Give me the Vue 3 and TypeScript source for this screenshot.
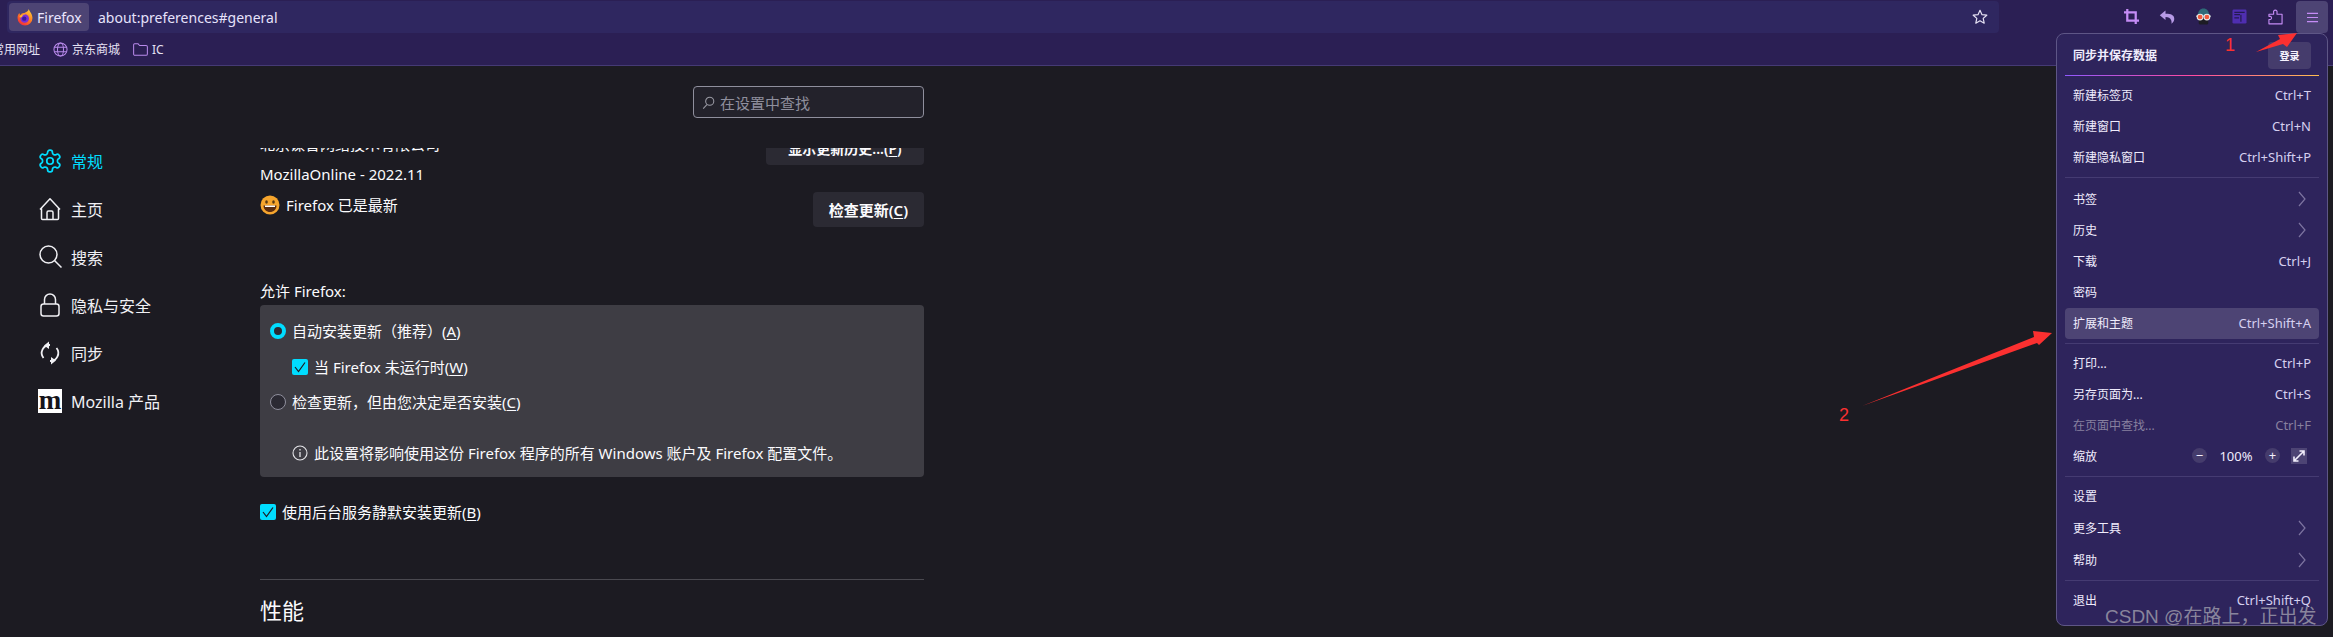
<script setup lang="ts">
interface MenuRow {
  label: string
  keys?: string
  arrow?: boolean
  active?: boolean
  muted?: boolean
  zoom?: boolean
}

const navItems = [
  { label: '常规', active: true, icon: 'gear' },
  { label: '主页', icon: 'home' },
  { label: '搜索', icon: 'search' },
  { label: '隐私与安全', icon: 'lock' },
  { label: '同步', icon: 'sync' },
  { label: 'Mozilla 产品', icon: 'mozilla' }
]

const menuGroups: { rows: MenuRow[]; roomy?: boolean }[] = [
  {
    rows: [
      { label: '新建标签页', keys: 'Ctrl+T' },
      { label: '新建窗口', keys: 'Ctrl+N' },
      { label: '新建隐私窗口', keys: 'Ctrl+Shift+P' }
    ]
  },
  {
    rows: [
      { label: '书签', arrow: true },
      { label: '历史', arrow: true },
      { label: '下载', keys: 'Ctrl+J' },
      { label: '密码' },
      { label: '扩展和主题', keys: 'Ctrl+Shift+A', active: true }
    ]
  },
  {
    rows: [
      { label: '打印...', keys: 'Ctrl+P' },
      { label: '另存页面为...', keys: 'Ctrl+S' },
      { label: '在页面中查找...', keys: 'Ctrl+F', muted: true },
      { label: '缩放', zoom: true }
    ]
  },
  {
    roomy: true,
    rows: [
      { label: '设置' },
      { label: '更多工具', arrow: true },
      { label: '帮助', arrow: true }
    ]
  },
  { rows: [{ label: '退出', keys: 'Ctrl+Shift+Q' }] }
]
</script>

<template>
  <div class="window">
    <header class="toolbar">
      <div class="urlbar">
        <div class="identity">
          <svg class="fx-logo" viewBox="0 0 16 18" width="16" height="17">
            <defs>
              <linearGradient id="fxg" x1="0.8" y1="0" x2="0.2" y2="1">
                <stop offset="0" stop-color="#ffd13a" />
                <stop offset="0.5" stop-color="#ff7a1f" />
                <stop offset="1" stop-color="#f0243f" />
              </linearGradient>
            </defs>
            <path d="M12 0c.5 2.500 3.800 4.800 3.900 9.500A7.900 7.900 0 0 1 8 17.500 7.900 7.900 0 0 1 .1 9.500C.1 7.500.8 5.600 2 4.300c.1 1 .6 1.700 1.200 2C4 4.800 5.600 4 7.300 4.200 9.500 3.500 11.500 2.200 12 0z" fill="url(#fxg)" />
            <circle cx="7.700" cy="10" r="4.500" fill="#7a2fd6" />
            <circle cx="7.200" cy="10.200" r="2.300" fill="#3b1a9c" />
            <path d="M2 8.500c1-2.500 4-3.500 6.500-2.800-2 .1-3.500 1.200-3.600 2.800-.8.500-1.900.500-2.900 0z" fill="#ffb52e" />
          </svg>
          <span>Firefox</span>
        </div>
        <span class="url-text">about:preferences#general</span>
        <svg class="star" viewBox="0 0 16 16" width="16" height="16">
          <path d="M8 1.300l2 4.400 4.800.5-3.600 3.200 1 4.800L8 11.800l-4.200 2.400 1-4.800L1.200 6.200 6 5.700z" fill="none" stroke="#e6e2f4" stroke-width="1.200" stroke-linejoin="round" />
        </svg>
      </div>

      <div class="tool-icons">
        <span class="tool">
          <svg viewBox="0 0 16 16" width="15" height="15" fill="none" stroke="#c58cf5" stroke-width="2.400">
            <path d="M3.500 0v12.500H16M0 3.500h12.500V16" />
          </svg>
        </span>
        <span class="tool">
          <svg viewBox="0 0 16 16" width="16" height="16">
            <path d="M6.500 1.500L.8 6.300l5.700 4.700V8c3 0 4.800 1 5.700 3.200.4 1 .5 2.300.3 3.500 2-1.700 3-3.500 2.700-5.800C14.800 6 11.800 4.600 6.500 4.700z" fill="#b79ae6" />
          </svg>
        </span>
        <span class="tool">
          <svg viewBox="0 0 16 16" width="17" height="17">
            <path d="M2.500 8C2.500 3 5 .5 8 .5S13.500 3 13.500 8z" fill="#2f6a78" />
            <rect x="3.500" y="9" width="9" height="6.500" rx="1.500" fill="#1d1c24" />
            <rect x="1" y="7" width="14" height="1.400" fill="#a9b2b8" />
            <circle cx="4.800" cy="8.500" r="2.700" fill="#f05a3c" stroke="#e7e7e7" />
            <circle cx="11.200" cy="8.500" r="2.700" fill="#f05a3c" stroke="#e7e7e7" />
          </svg>
        </span>
        <span class="tool">
          <svg viewBox="0 0 16 16" width="15" height="15">
            <rect x="0.500" y="0.500" width="15" height="15" rx="1.500" fill="#4f2eb0" />
            <path d="M2.500 3.500h11M2.500 6h6M9.500 6v7.500M2.500 9.500h5" stroke="#231a50" stroke-width="1.300" fill="none" />
          </svg>
        </span>
        <span class="tool">
          <svg viewBox="0 0 16 16" width="15" height="16" fill="none" stroke="#c58cf5" stroke-width="1.200" stroke-linejoin="round">
            <path d="M1 15.300v-4.700h1.500a1.700 1.700 0 0 0 0-3.300H1V5h5V3.200a1.900 1.900 0 1 1 3.600 0V5H15v10.300z" />
          </svg>
        </span>
        <button class="menu-btn">
          <svg viewBox="0 0 14 12" width="13" height="11" stroke="#c58cf5" stroke-width="1.300">
            <path d="M1 1.500h12M1 6h12M1 10.500h12" />
          </svg>
        </button>
      </div>
    </header>

    <nav class="bookmarks">
      <span class="mark clipped">常用网址</span>
      <span class="mark">
        <svg viewBox="0 0 16 16" width="15" height="15" fill="none" stroke="#b98aec" stroke-width="1.100">
          <circle cx="8" cy="8" r="7" />
          <ellipse cx="8" cy="8" rx="3.200" ry="7" />
          <path d="M1.500 5.500h13M1.500 10.500h13" />
        </svg>
        京东商城
      </span>
      <span class="mark">
        <svg viewBox="0 0 16 14" width="15" height="13" fill="none" stroke="#b98aec" stroke-width="1.100" stroke-linejoin="round">
          <path d="M.6 1.800Q.6.700 1.700.700h3.500l1.800 2h7q1.400 0 1.400 1.400v7.700q0 1.500-1.500 1.500H2.100Q.6 13.300.6 11.800z" />
        </svg>
        IC
      </span>
    </nav>

    <main class="page">
      <aside class="side-nav">
        <a v-for="item in navItems" :key="item.label" class="nav-item" :class="{ active: item.active }">
          <span class="nav-icon">
            <svg v-if="item.icon === 'gear'" class="gear" viewBox="0 0 24 24" width="26" height="26" fill="none" stroke="currentColor" stroke-width="1.600">
              <path d="M12.220 2h-.44a2 2 0 0 0-2 2v.18a2 2 0 0 1-1 1.730l-.43.25a2 2 0 0 1-2 0l-.15-.08a2 2 0 0 0-2.730.73l-.22.38a2 2 0 0 0 .73 2.730l.15.1a2 2 0 0 1 1 1.720v.51a2 2 0 0 1-1 1.740l-.15.09a2 2 0 0 0-.73 2.730l.22.38a2 2 0 0 0 2.730.73l.15-.08a2 2 0 0 1 2 0l.43.25a2 2 0 0 1 1 1.730V20a2 2 0 0 0 2 2h.44a2 2 0 0 0 2-2v-.18a2 2 0 0 1 1-1.730l.43-.25a2 2 0 0 1 2 0l.15.08a2 2 0 0 0 2.730-.73l.22-.39a2 2 0 0 0-.73-2.730l-.15-.08a2 2 0 0 1-1-1.740v-.5a2 2 0 0 1 1-1.740l.15-.09a2 2 0 0 0 .73-2.730l-.22-.38a2 2 0 0 0-2.730-.73l-.15.08a2 2 0 0 1-2 0l-.43-.25a2 2 0 0 1-1-1.730V4a2 2 0 0 0-2-2z" />
              <circle cx="12" cy="12" r="3" />
            </svg>
            <svg v-else-if="item.icon === 'home'" viewBox="0 0 24 24" width="24" height="24" fill="none" stroke="currentColor" stroke-width="1.500" stroke-linejoin="round">
              <path d="M2 12.500L12 1.800l10 10.700M3.500 11.500V21.500q0 1 1 1h15q1 0 1-1V11.500" />
              <path d="M9 22.500v-7q0-1.500 1.500-1.500h3q1.500 0 1.500 1.500v7" />
            </svg>
            <svg v-else-if="item.icon === 'search'" viewBox="0 0 24 24" width="24" height="24" fill="none" stroke="currentColor" stroke-width="1.500">
              <circle cx="10.500" cy="9.500" r="8.500" />
              <path d="M16.500 15.500l7 7" />
            </svg>
            <svg v-else-if="item.icon === 'lock'" viewBox="0 0 24 24" width="24" height="24" fill="none" stroke="currentColor" stroke-width="1.500">
              <rect x="3" y="11" width="18" height="12" rx="2.500" />
              <path d="M6.500 11V6.500a5.500 5.500 0 0 1 11 0V11" />
            </svg>
            <svg v-else-if="item.icon === 'sync'" viewBox="0 0 24 24" width="24" height="24">
              <path d="M5.500 17A8 8 0 0 1 12 4M18.500 7A8 8 0 0 1 12 20" fill="none" stroke="currentColor" stroke-width="1.800" />
              <path d="M11 0.500l-5 4 5 3.500zM13 23.500l5-4-5-3.500z" fill="currentColor" />
            </svg>
            <span v-else class="moz-logo">m</span>
          </span>
          <span>{{ item.label }}</span>
        </a>
      </aside>

      <section class="pane">
        <div class="search-row">
          <div class="search-box">
            <svg viewBox="0 0 16 16" width="13" height="15" fill="none" stroke="#9a9aa4" stroke-width="1.300">
              <circle cx="9.500" cy="6.500" r="5" />
              <path d="M6 10.500l-4.500 5" />
            </svg>
            <span>在设置中查找</span>
          </div>
        </div>

        <div class="scroller">
          <div class="line-row clipped-row">
            <span class="text-pad">北京谋智网络技术有限公司</span>
            <button class="btn wide">显示更新历史...(<u>P</u>)</button>
          </div>
          <div class="line version">MozillaOnline - 2022.11</div>
          <div class="line-row status-row">
            <span class="text-pad status">
              <svg viewBox="0 0 20 20" width="20" height="20">
                <ellipse cx="10" cy="10" rx="9.500" ry="9.500" fill="#f6a52d" />
                <ellipse cx="6.500" cy="7" rx="1.300" ry="1.800" fill="#5a3a14" />
                <ellipse cx="13.500" cy="7" rx="1.300" ry="1.800" fill="#5a3a14" />
                <path d="M3.500 10.500h13c0 4-3 6.500-6.500 6.500s-6.500-2.500-6.500-6.500z" fill="#5a2c10" />
                <path d="M5 10.500h10v1.500H5z" fill="#fff" />
              </svg>
              Firefox 已是最新
            </span>
            <button class="btn">检查更新(<u>C</u>)</button>
          </div>

          <div class="line allow">允许 Firefox:</div>
          <div class="option-box">
            <label class="opt">
              <i class="radio on"></i>
              <span>自动安装更新（推荐）(<u>A</u>)</span>
            </label>
            <label class="opt nested check-opt">
              <i class="check">
                <svg viewBox="0 0 16 16" width="16" height="16" fill="none" stroke="#1c1b22" stroke-width="1.200">
                  <path d="M3 8l3.500 4.500L13 3.500" />
                </svg>
              </i>
              <span>当 Firefox 未运行时(<u>W</u>)</span>
            </label>
            <label class="opt radio-second">
              <i class="radio"></i>
              <span>检查更新，但由您决定是否安装(<u>C</u>)</span>
            </label>
            <div class="opt nested info">
              <svg viewBox="0 0 16 16" width="16" height="16" fill="none" stroke="#e4e4e8" stroke-width="1.100">
                <circle cx="8" cy="8" r="7" />
                <path d="M8 7v5M8 4v1.600" stroke-width="1.300" />
              </svg>
              <span>此设置将影响使用这份 Firefox 程序的所有 Windows 账户及 Firefox 配置文件。</span>
            </div>
          </div>

          <label class="opt service">
            <i class="check">
              <svg viewBox="0 0 16 16" width="16" height="16" fill="none" stroke="#1c1b22" stroke-width="1.200">
                <path d="M3 8l3.500 4.500L13 3.500" />
              </svg>
            </i>
            <span>使用后台服务静默安装更新(<u>B</u>)</span>
          </label>

          <hr class="rule" />
          <h2 class="heading">性能</h2>
        </div>
      </section>
    </main>

    <!-- 浏览器菜单 -->
    <div class="app-menu">
      <div class="sync-head">
        <strong>同步并保存数据</strong>
        <button class="login">登录</button>
      </div>
      <div class="rainbow"></div>
      <template v-for="(group, i) in menuGroups" :key="i">
        <div v-if="i > 0" class="menu-sep" :class="{ tight: i > 1 }"></div>
        <div class="menu-group" :class="{ roomy: group.roomy }">
          <div
            v-for="row in group.rows"
            :key="row.label"
            class="menu-row"
            :class="{ active: row.active, muted: row.muted }"
          >
            <span>{{ row.label }}</span>
            <span v-if="row.keys" class="keys">{{ row.keys }}</span>
            <svg v-if="row.arrow" class="chevron" viewBox="0 0 8 16" width="8" height="16" fill="none" stroke="#7d74a0" stroke-width="1.200">
              <path d="M1 1l6 7-6 7" />
            </svg>
            <div v-if="row.zoom" class="zoom-ctl">
              <i class="round">−</i>
              <span class="pct">100%</span>
              <i class="round">+</i>
              <i class="full">
                <svg viewBox="0 0 16 16" width="16" height="16" fill="none" stroke="#f2eefc" stroke-width="1.600">
                  <path d="M3 13L13 3M8.500 3H13v4.500M3 8.500V13h4.500" />
                </svg>
              </i>
            </div>
          </div>
        </div>
      </template>
    </div>

    <!-- 截图标注 -->
    <svg class="marks" viewBox="0 0 2333 637" width="2333" height="637">
      <polygon points="2256,52 2283,44 2287,47 2297,33 2278,35 2280,39" fill="#fb3030" />
      <polygon points="1862,406 2037,343 2039,345 2052,333 2033,331 2034,337" fill="#fb3030" />
    </svg>
    <span class="num num-1">1</span>
    <span class="num num-2">2</span>
    <span class="watermark">CSDN @在路上，正出发</span>
  </div>
</template>

<style scoped>
.window {
  position: relative;
  width: 2333px;
  height: 637px;
  overflow: hidden;
  display: flex;
  flex-direction: column;
  background: #1c1b22;
  color: #fbfbfe;
  font-family: "Noto Sans", "Noto Sans CJK SC", sans-serif;
  font-size: 15px;
}

u {
  text-underline-offset: 2px;
}

.toolbar {
  height: 33px;
  flex-shrink: 0;
  display: flex;
  align-items: flex-start;
  background: #2b1f54;
  padding-left: 7px;
}

.urlbar {
  width: 1990px;
  height: 32px;
  margin-top: 1px;
  display: flex;
  align-items: center;
  padding-left: 2px;
  background: #2f2760;
  border-radius: 4px;
}

.identity {
  width: 80px;
  height: 28px;
  display: flex;
  align-items: center;
  gap: 4px;
  padding-left: 8px;
  box-sizing: border-box;
  background: #4d4474;
  border-radius: 4px;
  color: #ebe6ff;
  font-size: 14px;
}

.url-text {
  margin-left: 9px;
  font-size: 14px;
  color: #e6e2fb;
}

.star {
  margin-left: auto;
  margin-right: 11px;
}

.tool-icons {
  margin-left: auto;
  display: flex;
  align-items: center;
  padding-right: 5px;
  height: 33px;
}

.tool {
  width: 36px;
  height: 33px;
  display: flex;
  align-items: center;
  justify-content: center;
}

.menu-btn {
  width: 32px;
  height: 32px;
  margin-left: 3px;
  margin-top: 1px;
  padding: 0;
  border: none;
  border-radius: 4px;
  background: #4d4474;
  display: flex;
  align-items: center;
  justify-content: center;
}

.bookmarks {
  height: 33px;
  flex-shrink: 0;
  box-sizing: border-box;
  display: flex;
  align-items: center;
  gap: 13px;
  background: #2b1f54;
  border-bottom: 1px solid #453a75;
  font-size: 12px;
  color: #e6e2f4;
}

.mark {
  display: flex;
  align-items: center;
  gap: 4px;
}

.clipped {
  margin-left: -8px;
}

.page {
  flex: 1;
  display: flex;
  min-height: 0;
}

.side-nav {
  width: 260px;
  flex-shrink: 0;
  padding: 71px 0 0 38px;
  box-sizing: border-box;
}

.nav-item {
  height: 48px;
  display: flex;
  align-items: center;
  gap: 9px;
  font-size: 16px;
  color: #f0f0f4;
}

.nav-item.active {
  color: #00ddff;
}

.nav-icon {
  width: 24px;
  height: 24px;
  display: flex;
}

.gear {
  flex-shrink: 0;
  margin: -1px;
}

.moz-logo {
  width: 24px;
  height: 24px;
  background: #fff;
  color: #15141a;
  font-family: "Liberation Serif", serif;
  font-weight: 700;
  font-size: 27px;
  line-height: 22px;
  text-align: center;
}

.pane {
  width: 664px;
  display: flex;
  flex-direction: column;
  min-height: 0;
}

.search-row {
  height: 82px;
  flex-shrink: 0;
  display: flex;
  justify-content: flex-end;
  align-items: flex-start;
  padding-top: 20px;
  box-sizing: border-box;
}

.search-box {
  width: 231px;
  height: 32px;
  box-sizing: border-box;
  display: flex;
  align-items: center;
  gap: 5px;
  padding-left: 8px;
  background: #23222b;
  border: 1px solid #8f8f9d;
  border-radius: 4px;
  color: #8f8f9d;
}

.scroller {
  flex: 1;
  min-height: 0;
  overflow: hidden;
}

.line-row {
  display: flex;
  justify-content: space-between;
  align-items: flex-start;
}

.clipped-row {
  margin-top: -18px;
}

.text-pad {
  padding-top: 4px;
  line-height: 20px;
}

.line {
  line-height: 20px;
}

.version {
  margin-top: -1px;
}

.status-row {
  margin-top: 8px;
}

.status {
  display: flex;
  align-items: center;
  gap: 6px;
  padding-top: 3px;
}

.btn {
  height: 35px;
  padding: 0 16px;
  border: none;
  border-radius: 4px;
  background: #2b2a33;
  color: #fbfbfe;
  font: inherit;
  font-weight: 600;
  font-size: 15px;
}

.btn.wide {
  width: 158px;
  padding: 0;
  font-size: 14px;
}

.allow {
  margin-top: 54px;
}

.option-box {
  margin-top: 4px;
  height: 172px;
  box-sizing: border-box;
  padding: 16px 10px 0;
  background: #3e3d44;
  border-radius: 4px;
}

.opt {
  display: flex;
  align-items: center;
  gap: 6px;
  line-height: 20px;
}

.nested {
  margin-left: 22px;
}

.check-opt {
  margin-top: 16px;
}

.radio-second {
  margin-top: 15px;
}

.info {
  margin-top: 31px;
}

.radio {
  width: 16px;
  height: 16px;
  flex-shrink: 0;
  box-sizing: border-box;
  border-radius: 50%;
  background: #2b2a33;
  border: 1px solid #8f8f9d;
}

.radio.on {
  border: 4px solid #00ddff;
  background: #2b2a33;
}

.check {
  width: 16px;
  height: 16px;
  flex-shrink: 0;
  border-radius: 2px;
  background: #00ddff;
  display: flex;
}

.service {
  margin-top: 25px;
}

.rule {
  margin: 57px 0 0;
  border: none;
  height: 1px;
  background: #4a4950;
}

.heading {
  margin: 14px 0 0;
  font-size: 22px;
  font-weight: 400;
  line-height: 32px;
}

.app-menu {
  position: absolute;
  left: 2056px;
  top: 33px;
  width: 272px;
  height: 593px;
  box-sizing: border-box;
  padding: 0 8px;
  background: #2e245c;
  border: 1px solid #5e5686;
  border-radius: 8px;
  font-size: 12px;
  color: #f0ecfc;
}

.sync-head {
  height: 41px;
  display: flex;
  align-items: center;
  justify-content: space-between;
  padding: 2px 8px 0;
  box-sizing: border-box;
}

.sync-head strong {
  font-weight: 700;
  margin-top: -2px;
}

.login {
  width: 43px;
  height: 27px;
  border: none;
  border-radius: 4px;
  background: #453c6c;
  color: #f6f3ff;
  font: inherit;
  font-size: 10px;
  font-weight: 700;
}

.rainbow {
  height: 1px;
  margin-bottom: 4px;
  background: linear-gradient(90deg, #9059ff, #ff4aa2, #ffbd4f);
}

.menu-group.roomy .menu-row + .menu-row {
  margin-top: 1px;
}

.menu-row {
  height: 31px;
  box-sizing: border-box;
  display: flex;
  align-items: center;
  justify-content: space-between;
  padding: 0 8px 2px;
  border-radius: 4px;
}

.menu-row.active {
  background: #4d4474;
}

.menu-row.muted {
  color: #87809f;
}

.keys {
  font-size: 13px;
  color: #d6d0f0;
}

.muted .keys {
  color: #87809f;
}

.chevron {
  margin-right: 5px;
}

.menu-sep {
  height: 1px;
  margin: 4px 0 6px;
  background: #453b72;
}

.menu-sep.tight {
  margin-bottom: 4px;
}

.zoom-ctl {
  display: flex;
  align-items: center;
  margin-right: 4px;
}

.round {
  width: 15px;
  height: 15px;
  border-radius: 50%;
  background: #453c6c;
  font-style: normal;
  font-size: 13px;
  line-height: 15px;
  text-align: center;
  color: #f2eefc;
}

.pct {
  width: 58px;
  text-align: center;
  font-size: 13px;
}

.full {
  width: 16px;
  height: 16px;
  margin-left: 11px;
  background: #4d4474;
  display: flex;
}

.marks {
  position: absolute;
  left: 0;
  top: 0;
  pointer-events: none;
}

.num {
  position: absolute;
  color: #fb3030;
  font-family: "Liberation Sans", sans-serif;
  font-size: 18px;
  line-height: 20px;
}

.num-1 {
  left: 2225px;
  top: 35px;
}

.num-2 {
  left: 1839px;
  top: 405px;
}

.watermark {
  position: absolute;
  left: 2105px;
  top: 605px;
  font-family: "Liberation Sans", "Noto Sans CJK SC", sans-serif;
  font-size: 19px;
  line-height: 24px;
  white-space: nowrap;
  color: rgba(200, 200, 200, 0.6);
}
</style>

<style>
html,
body {
  margin: 0;
  background: #1c1b22;
}
</style>
